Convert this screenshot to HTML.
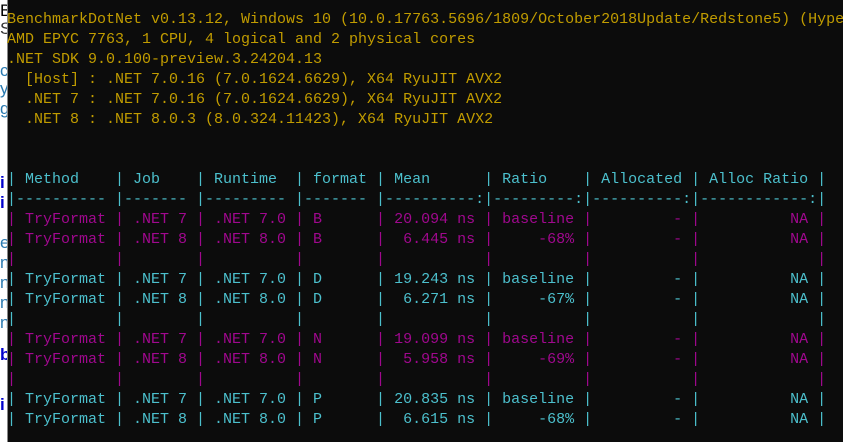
<!DOCTYPE html>
<html><head><meta charset="utf-8"><style>
html,body{margin:0;padding:0;width:843px;height:442px;overflow:hidden;background:#fff;}
#t{position:absolute;left:7px;top:0;width:836px;height:442px;background:#0c0c0c;border-left:1px solid #888;box-sizing:border-box;}
pre{position:absolute;left:7px;top:10px;margin:0;font-family:"Liberation Mono",monospace;font-size:15px;line-height:20px;white-space:pre;color:#c19c00;}
.c{color:#4cc0cd}.m{color:#a0088e}.y{color:#c19c00}
.l{position:absolute;left:0;font-family:"Liberation Sans",sans-serif;font-size:17px;line-height:17px;}
</style></head><body>
<div class="l" style="top:2px;color:#000">B</div>
<div class="l" style="top:20px;color:#333">S</div>
<div class="l" style="top:62px;color:#2a7ab0">c</div>
<div class="l" style="top:80px;color:#2a7ab0">y</div>
<div class="l" style="top:100px;color:#2a7ab0">g</div>
<div class="l" style="top:174px;color:#00c;font-weight:bold">i</div>
<div class="l" style="top:194px;color:#00c;font-weight:bold">i</div>
<div class="l" style="top:234px;color:#2a7ab0">e</div>
<div class="l" style="top:254px;color:#2a7ab0">n</div>
<div class="l" style="top:274px;color:#2a7ab0">n</div>
<div class="l" style="top:294px;color:#2a7ab0">n</div>
<div class="l" style="top:314px;color:#2a7ab0">n</div>
<div class="l" style="top:346px;color:#00c;font-weight:bold">b</div>
<div class="l" style="top:396px;color:#00c;font-weight:bold">i</div>
<div id="t"></div>
<pre><span class="y">BenchmarkDotNet v0.13.12, Windows 10 (10.0.17763.5696/1809/October2018Update/Redstone5) (Hype
AMD EPYC 7763, 1 CPU, 4 logical and 2 physical cores
.NET SDK 9.0.100-preview.3.24204.13
  [Host] : .NET 7.0.16 (7.0.1624.6629), X64 RyuJIT AVX2
  .NET 7 : .NET 7.0.16 (7.0.1624.6629), X64 RyuJIT AVX2
  .NET 8 : .NET 8.0.3 (8.0.324.11423), X64 RyuJIT AVX2</span>


<span class="c">| Method    | Job    | Runtime  | format | Mean      | Ratio    | Allocated | Alloc Ratio |
|---------- |------- |--------- |------- |----------:|---------:|----------:|------------:|</span>
<span class="m">| TryFormat | .NET 7 | .NET 7.0 | B      | 20.094 ns | baseline |         - |          NA |
| TryFormat | .NET 8 | .NET 8.0 | B      |  6.445 ns |     -68% |         - |          NA |
|           |        |          |        |           |          |           |             |</span>
<span class="c">| TryFormat | .NET 7 | .NET 7.0 | D      | 19.243 ns | baseline |         - |          NA |
| TryFormat | .NET 8 | .NET 8.0 | D      |  6.271 ns |     -67% |         - |          NA |
|           |        |          |        |           |          |           |             |</span>
<span class="m">| TryFormat | .NET 7 | .NET 7.0 | N      | 19.099 ns | baseline |         - |          NA |
| TryFormat | .NET 8 | .NET 8.0 | N      |  5.958 ns |     -69% |         - |          NA |
|           |        |          |        |           |          |           |             |</span>
<span class="c">| TryFormat | .NET 7 | .NET 7.0 | P      | 20.835 ns | baseline |         - |          NA |
| TryFormat | .NET 8 | .NET 8.0 | P      |  6.615 ns |     -68% |         - |          NA |</span></pre>
</body></html>
